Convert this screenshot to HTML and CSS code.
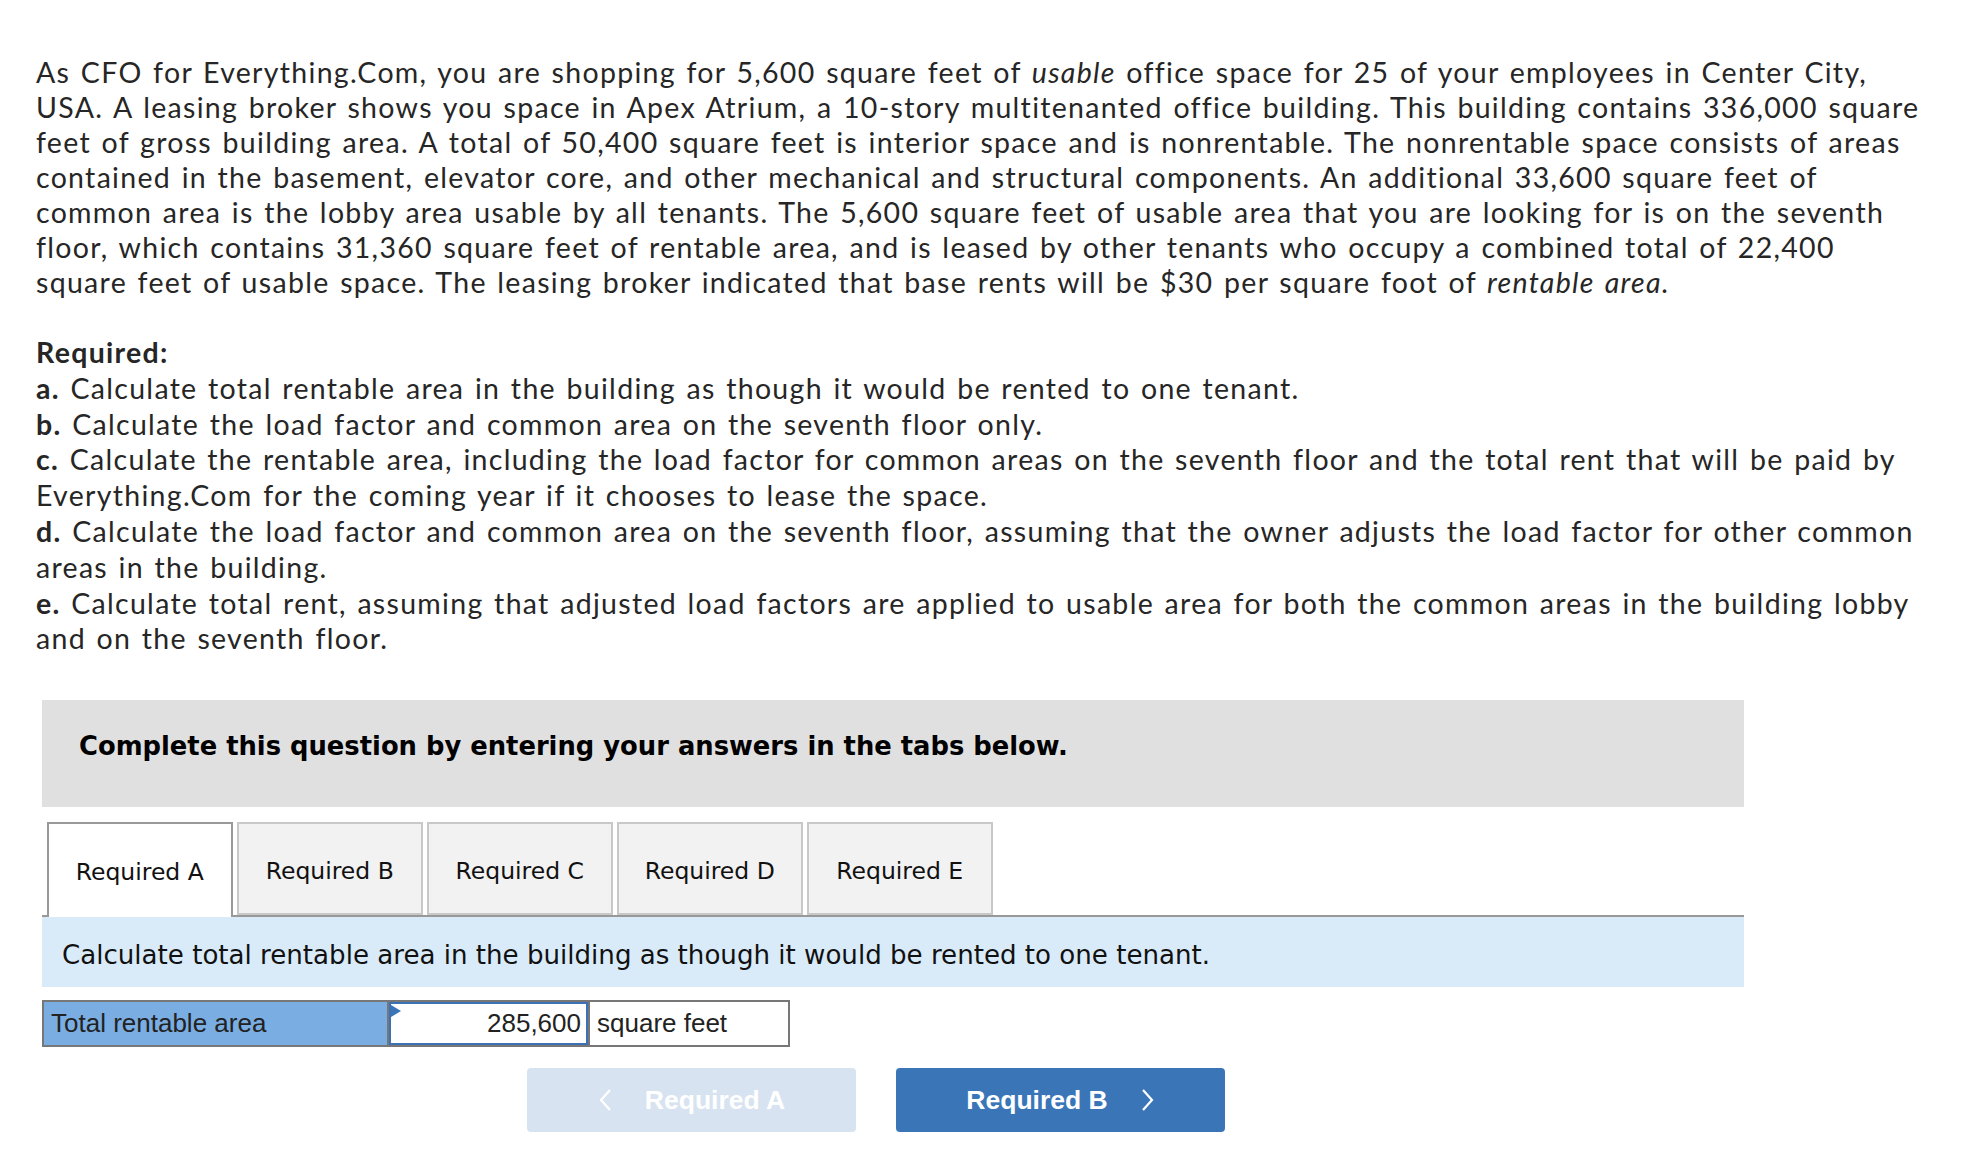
FILE: index.html
```html
<!DOCTYPE html>
<html lang="en">
<head>
<meta charset="utf-8">
<title>Everything.Com – Rentable area</title>
<link rel="stylesheet" href="styles.css">
</head>
<body>
<main class="page">
  <section class="question">
    <p class="intro">As CFO for Everything.Com, you are shopping for 5,600 square feet of <em>usable</em> office space for 25 of your employees in Center City,<br>USA. A leasing broker shows you space in Apex Atrium, a 10-story multitenanted office building. This building contains 336,000 square<br>feet of gross building area. A total of 50,400 square feet is interior space and is nonrentable. The nonrentable space consists of areas<br>contained in the basement, elevator core, and other mechanical and structural components. An additional 33,600 square feet of<br>common area is the lobby area usable by all tenants. The 5,600 square feet of usable area that you are looking for is on the seventh<br>floor, which contains 31,360 square feet of rentable area, and is leased by other tenants who occupy a combined total of 22,400<br>square feet of usable space. The leasing broker indicated that base rents will be $30 per square foot of <em>rentable area.</em></p>
    <p class="required"><strong>Required:</strong><br><strong>a.</strong> Calculate total rentable area in the building as though it would be rented to one tenant.<br><strong>b.</strong> Calculate the load factor and common area on the seventh floor only.<br><strong>c.</strong> Calculate the rentable area, including the load factor for common areas on the seventh floor and the total rent that will be paid by<br>Everything.Com for the coming year if it chooses to lease the space.<br><strong>d.</strong> Calculate the load factor and common area on the seventh floor, assuming that the owner adjusts the load factor for other common<br>areas in the building.<br><strong>e.</strong> Calculate total rent, assuming that adjusted load factors are applied to usable area for both the common areas in the building lobby<br>and on the seventh floor.</p>
  </section>

  <section class="worksheet">
    <div class="banner">
      <p>Complete this question by entering your answers in the tabs below.</p>
    </div>

    <div class="tabs">
      <div class="tab active">Required A</div>
      <div class="tab">Required B</div>
      <div class="tab">Required C</div>
      <div class="tab">Required D</div>
      <div class="tab">Required E</div>
    </div>

    <div class="instruction">Calculate total rentable area in the building as though it would be rented to one tenant.</div>

    <div class="answer">
      <div class="answer-label">Total rentable area</div>
      <div class="answer-input"><span class="marker"></span>285,600</div>
      <div class="answer-unit">square feet</div>
    </div>

    <div class="nav">
      <button class="nav-btn prev" type="button">
        <svg class="chev" width="14" height="22" viewBox="0 0 14 22"><polyline points="12,1 3,11 12,21" fill="none" stroke="#fff" stroke-width="2.2"/></svg>
        <span>Required A</span>
      </button>
      <button class="nav-btn next" type="button">
        <span>Required B</span>
        <svg class="chev" width="14" height="22" viewBox="0 0 14 22"><polyline points="2,1 11,11 2,21" fill="none" stroke="#fff" stroke-width="2.2"/></svg>
      </button>
    </div>
  </section>
</main>
</body>
</html>
```

FILE: styles.css
```css
html, body {
  margin: 0;
  padding: 0;
  background: #ffffff;
}

.page {
  padding-top: 55px;
}

.question {
  padding-left: 36px;
  font-family: "Lato", "Noto Sans", sans-serif;
  font-size: 28.5px;
  letter-spacing: 1.3px;
  word-spacing: 2px;
  line-height: 35px;
  color: #262626;
  white-space: nowrap;
}

.question p {
  margin: 0;
}

.question .required {
  margin-top: 35px;
  line-height: 35.8px;
}

.question strong {
  font-weight: 700;
}

.worksheet {
  margin: 43px 0 0 42px;
  width: 1702px;
}

.banner {
  height: 107px;
  box-sizing: border-box;
  background: #e0e0e0;
  padding: 31px 37px 0;
}

.banner p {
  margin: 0;
  font-family: "DejaVu Sans", Verdana, sans-serif;
  font-weight: 700;
  font-size: 25.8px;
  line-height: 30px;
  color: #000;
}

.tabs {
  display: flex;
  gap: 4.5px;
  margin-top: 15px;
  padding-left: 5px;
  height: 93px;
  border-bottom: 2px solid #999999;
}

.tab {
  width: 185.5px;
  height: 93px;
  box-sizing: border-box;
  border: 2px solid #c8c8c8;
  background: #f2f2f2;
  display: flex;
  align-items: center;
  justify-content: center;
  padding-top: 4px;
  font-family: "DejaVu Sans", Verdana, sans-serif;
  font-size: 23.5px;
  color: #111;
}

.tab.active {
  background: #ffffff;
  border-color: #999999;
  border-bottom: none;
  height: 95px;
  padding-top: 2px;
  position: relative;
  z-index: 1;
}

.instruction {
  height: 70px;
  box-sizing: border-box;
  background: #d9ebf9;
  display: flex;
  align-items: center;
  padding: 6px 0 0 20px;
  font-family: "DejaVu Sans", Verdana, sans-serif;
  font-size: 26.1px;
  color: #111;
}

.answer {
  margin-top: 13px;
  width: 748px;
  height: 47px;
  box-sizing: border-box;
  border: 2px solid #777777;
  display: flex;
  font-family: "Liberation Sans", Arial, sans-serif;
  font-size: 26px;
  color: #222;
}

.answer-label {
  width: 336px;
  background: #7aaee2;
  border-right: 2px solid #777777;
  padding-left: 7px;
  display: flex;
  align-items: center;
}

.answer-input {
  position: relative;
  width: 199px;
  box-sizing: border-box;
  border: 2px solid #3a72b5;
  background: #fff;
  display: flex;
  align-items: center;
  justify-content: flex-end;
  padding-right: 5px;
}

.marker {
  position: absolute;
  left: 0;
  top: 1px;
  width: 0;
  height: 0;
  border-left: 10px solid #3a75b8;
  border-top: 6px solid transparent;
  border-bottom: 6px solid transparent;
}

.answer-unit {
  flex: 1;
  border-left: 2px solid #777777;
  padding-left: 7px;
  display: flex;
  align-items: center;
}

.nav {
  display: flex;
  gap: 40px;
  margin-top: 21px;
  padding-left: 485px;
}

.nav-btn {
  width: 329px;
  height: 64px;
  border: none;
  border-radius: 4px;
  display: flex;
  align-items: center;
  justify-content: center;
  gap: 33px;
  font-family: "Liberation Sans", Arial, sans-serif;
  font-weight: 700;
  font-size: 26.5px;
  color: #ffffff;
  padding: 0;
}

.nav-btn.prev {
  background: #d7e3f1;
}

.nav-btn.next {
  background: #3a75b8;
}

.chev {
  display: block;
}
```
